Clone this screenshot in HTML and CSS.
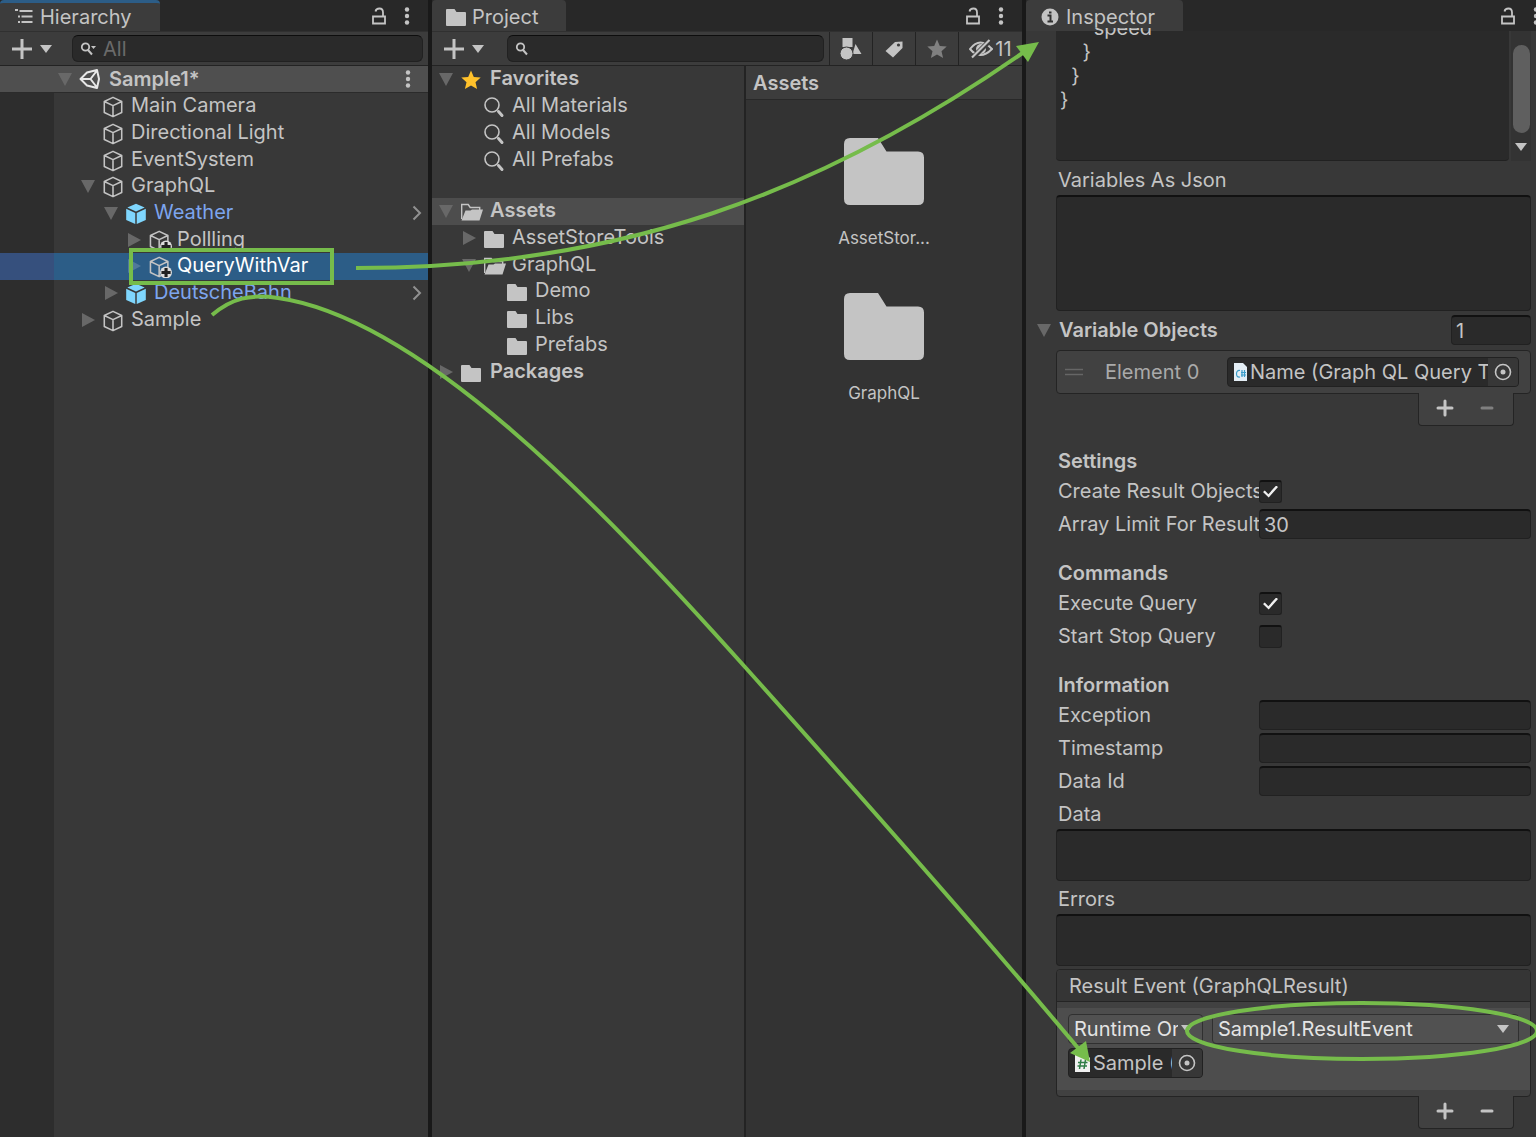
FILE: index.html
```html
<!DOCTYPE html>
<html lang="en">
<head>
<meta charset="utf-8">
<title>Editor</title>
<link rel="stylesheet" href="styles.css">
</head>
<body>
<svg class="sprite" aria-hidden="true">
  <symbol id="cube" viewBox="0 0 22 24"><path d="M11 1.500 20.500 6v12L11 22.500 1.500 18V6zM1.500 6 11 10.500 20.500 6M11 10.500v12" fill="none" stroke="currentColor" stroke-width="1.700" stroke-linejoin="round"/></symbol>
  <symbol id="cube-add" viewBox="0 0 26 24"><path d="M11 1.500 20.500 6v12L11 22.500 1.500 18V6zM1.500 6 11 10.500 20.500 6M11 10.500v12" fill="none" stroke="currentColor" stroke-width="1.700" stroke-linejoin="round"/><circle cx="18.500" cy="18" r="6.500" fill="#dcdcdc"/><path d="M18.500 13v10M13.500 18h10" stroke="#222" stroke-width="3.400"/></symbol>
  <symbol id="prefab" viewBox="0 0 22 24"><path d="M11 .8 20.500 5 11 9.400 1.500 5zM.3 6.300 10.200 10.800V23L.3 18.500zM21.700 6.300 11.800 10.800V23l9.900-4.500z" fill="#7fd6fd"/></symbol>
  <symbol id="unity" viewBox="0 0 22 22"><path d="M1.500 11 8 4.500 18 2 20 11 18 20 8 17.500zM11.500 11H2M11.500 11 18 2.500M11.500 11 18 19.500" fill="none" stroke="#e8e8e8" stroke-width="2" stroke-linejoin="round"/></symbol>
  <symbol id="open" viewBox="0 0 16 16"><path d="M1 2h14L8 15z" fill="currentColor"/></symbol>
  <symbol id="closed" viewBox="0 0 16 16"><path d="M2 1v14l13-7z" fill="currentColor"/></symbol>
  <symbol id="folder" viewBox="0 0 22 20"><path d="M1 3q0-1 1-1h7.500l2 3H20q1 0 1 1v12q0 1-1 1H2q-1 0-1-1z" fill="currentColor"/></symbol>
  <symbol id="folder-open" viewBox="0 0 24 20"><path d="M1.700 17V2.500h6.500l2 3h9.500V8" fill="none" stroke="currentColor" stroke-width="1.400"/><path d="M5.500 8.500h5l1.500-1h11L19.500 18.500H1.500z" fill="currentColor"/></symbol>
  <symbol id="big-folder" viewBox="0 0 80 67"><path d="M0 6q0-6 6-6h28l8.500 13.500H74q6 0 6 6V61q0 6-6 6H6q-6 0-6-6z" fill="currentColor"/></symbol>
  <symbol id="star" viewBox="0 0 20 20"><path d="M10 .5 12.800 7l6.900.6-5.200 4.600 1.600 6.900L10 15.500l-6.100 3.600 1.600-6.900L.3 7.600 7.200 7z" fill="currentColor"/></symbol>
  <symbol id="lens" viewBox="0 0 22 22"><circle cx="9" cy="9" r="7" fill="none" stroke="currentColor" stroke-width="1.600"/><path d="m15.500 15.500 3.500 4" stroke="currentColor" stroke-width="3" stroke-linecap="round"/></symbol>
  <symbol id="lens-small" viewBox="0 0 16 14"><circle cx="5.500" cy="5" r="3.700" fill="none" stroke="currentColor" stroke-width="1.800"/><path d="m8 8 4 4.500" stroke="currentColor" stroke-width="2"/></symbol>
  <symbol id="lens-menu" viewBox="0 0 16 14"><circle cx="5.500" cy="5" r="3.700" fill="none" stroke="currentColor" stroke-width="1.800"/><path d="m8 8 4 4.500" stroke="currentColor" stroke-width="2"/><path d="M11 4h5l-2.500 3z" fill="currentColor"/></symbol>
  <symbol id="plus" viewBox="0 0 20 20"><path d="M10 0v20M0 10h20" stroke="currentColor" stroke-width="3"/></symbol>
  <symbol id="caret" viewBox="0 0 12 8"><path d="M0 0h12L6 8z" fill="currentColor"/></symbol>
  <symbol id="lock" viewBox="0 0 16 18"><path d="M2 9.500h12v7H2zM4.500 4.500Q5 1.500 8.500 1.500q3.500 0 3.500 4v4" fill="none" stroke="currentColor" stroke-width="1.800"/></symbol>
  <symbol id="dots" viewBox="0 0 6 18"><circle cx="3" cy="2.500" r="2.200" fill="currentColor"/><circle cx="3" cy="9" r="2.200" fill="currentColor"/><circle cx="3" cy="15.500" r="2.200" fill="currentColor"/></symbol>
  <symbol id="chevron" viewBox="0 0 10 16"><path d="m1.500 1.500 6.500 6.500-6.500 6.500" fill="none" stroke="#919191" stroke-width="2"/></symbol>
  <symbol id="target" viewBox="0 0 18 18"><circle cx="9" cy="9" r="7.500" fill="none" stroke="currentColor" stroke-width="1.600"/><circle cx="9" cy="9" r="2.500" fill="currentColor"/></symbol>
  <symbol id="add" viewBox="0 0 18 18"><path d="M9 2v14M2 9h14" stroke="currentColor" stroke-width="3" stroke-linecap="round"/></symbol>
  <symbol id="remove" viewBox="0 0 18 18"><path d="M4 9h10" stroke="currentColor" stroke-width="3" stroke-linecap="round"/></symbol>
</svg>

<main class="editor">
  <section class="panel" aria-label="Hierarchy">
    <header class="tabs">
      <button class="tab tab-focused"><svg class="i18" viewBox="0 0 18 18" aria-hidden="true"><path d="M0 2h3M4.500 3h13M6.500 8.500h11M6.500 14h11M3 8.500h2M3 14h2" stroke="currentColor" stroke-width="2"/></svg>Hierarchy</button>
      <div class="tab-actions">
        <button aria-label="Lock"><svg class="lock"><use href="#lock"/></svg></button>
        <button aria-label="Menu"><svg class="dots"><use href="#dots"/></svg></button>
      </div>
    </header>
    <div class="toolbar">
      <button class="create" aria-label="Create"><svg class="i20"><use href="#plus"/></svg><svg class="caret"><use href="#caret"/></svg></button>
      <label class="search"><svg class="lens"><use href="#lens-menu"/></svg><input type="text" placeholder="All" aria-label="Search hierarchy"></label>
    </div>
    <div class="scene"><svg class="tri"><use href="#open"/></svg><svg class="icon"><use href="#unity"/></svg><b>Sample1*</b><button class="push" aria-label="Scene menu"><svg class="dots"><use href="#dots"/></svg></button></div>
    <div class="outline">
      <ul class="tree tree-scene">
        <li class="row d1"><svg class="tri"></svg><svg class="icon"><use href="#cube"/></svg><span>Main Camera</span></li>
        <li class="row d1"><svg class="tri"></svg><svg class="icon"><use href="#cube"/></svg><span>Directional Light</span></li>
        <li class="row d1"><svg class="tri"></svg><svg class="icon"><use href="#cube"/></svg><span>EventSystem</span></li>
        <li class="row d1"><svg class="tri"><use href="#open"/></svg><svg class="icon"><use href="#cube"/></svg><span>GraphQL</span></li>
        <li class="row d2 prefab"><svg class="tri"><use href="#open"/></svg><svg class="icon"><use href="#prefab"/></svg><span>Weather</span><svg class="chevron push"><use href="#chevron"/></svg></li>
        <li class="row d3"><svg class="tri"><use href="#closed"/></svg><svg class="icon icon-wide"><use href="#cube-add"/></svg><span>Pollling</span></li>
        <li class="row d3 selected"><svg class="tri"><use href="#closed"/></svg><svg class="icon icon-wide"><use href="#cube-add"/></svg><span>QueryWithVar</span></li>
        <li class="row d2 prefab"><svg class="tri"><use href="#closed"/></svg><svg class="icon"><use href="#prefab"/></svg><span>DeutscheBahn</span><svg class="chevron push"><use href="#chevron"/></svg></li>
        <li class="row d1"><svg class="tri"><use href="#closed"/></svg><svg class="icon"><use href="#cube"/></svg><span>Sample</span></li>
      </ul>
    </div>
  </section>

  <section class="panel" aria-label="Project">
    <header class="tabs">
      <button class="tab"><svg class="icon"><use href="#folder"/></svg>Project</button>
      <div class="tab-actions">
        <button aria-label="Lock"><svg class="lock"><use href="#lock"/></svg></button>
        <button aria-label="Menu"><svg class="dots"><use href="#dots"/></svg></button>
      </div>
    </header>
    <div class="toolbar toolbar-flush">
      <button class="create" aria-label="Create"><svg class="i20"><use href="#plus"/></svg><svg class="caret"><use href="#caret"/></svg></button>
      <label class="search search-project"><svg class="lens"><use href="#lens-small"/></svg><input type="text" aria-label="Search project"></label>
      <button class="filter" aria-label="Search by type"><svg class="i22" viewBox="0 0 22 24"><path d="M2.500 1h10v9h-10zM15.500 7l6 10h-9z" fill="currentColor"/><circle cx="6.500" cy="16.500" r="6.500" fill="currentColor" stroke="#3c3c3c"/></svg></button>
      <button class="filter" aria-label="Search by label"><svg class="i20" viewBox="0 0 20 20"><path d="M1.500 12 11 3l7.500-.5V9L9 18.500z" fill="currentColor"/><circle cx="14.500" cy="6" r="1.600" fill="#3c3c3c"/></svg></button>
      <button class="filter faded" aria-label="Save search"><svg class="i20"><use href="#star"/></svg></button>
      <button class="filter filter-count" aria-label="Hidden packages"><svg class="i24" viewBox="0 0 24 20"><path d="M1 10q10-13 22 0-12 12-22 0z" fill="none" stroke="currentColor" stroke-width="2"/><circle cx="12" cy="10" r="5" fill="currentColor"/><path d="M4 18.500 21 1.500" stroke="#3c3c3c" stroke-width="5"/><path d="M3 18.500 20.500 1" stroke="currentColor" stroke-width="2.200"/></svg>11</button>
    </div>
    <div class="browser">
      <nav class="folders" aria-label="Folders">
        <ul class="tree tree-favorites">
          <li class="row d0"><svg class="tri"><use href="#open"/></svg><svg class="icon gold"><use href="#star"/></svg><b>Favorites</b></li>
          <li class="row d1"><svg class="tri"></svg><svg class="icon"><use href="#lens"/></svg><span>All Materials</span></li>
          <li class="row d1"><svg class="tri"></svg><svg class="icon"><use href="#lens"/></svg><span>All Models</span></li>
          <li class="row d1"><svg class="tri"></svg><svg class="icon"><use href="#lens"/></svg><span>All Prefabs</span></li>
        </ul>
        <ul class="tree tree-folders">
          <li class="row d0 current"><svg class="tri"><use href="#open"/></svg><svg class="icon icon-open"><use href="#folder-open"/></svg><b>Assets</b></li>
          <li class="row d1"><svg class="tri"><use href="#closed"/></svg><svg class="icon"><use href="#folder"/></svg><span>AssetStoreTools</span></li>
          <li class="row d1"><svg class="tri"><use href="#open"/></svg><svg class="icon icon-open"><use href="#folder-open"/></svg><span>GraphQL</span></li>
          <li class="row d2"><svg class="tri"></svg><svg class="icon"><use href="#folder"/></svg><span>Demo</span></li>
          <li class="row d2"><svg class="tri"></svg><svg class="icon"><use href="#folder"/></svg><span>Libs</span></li>
          <li class="row d2"><svg class="tri"></svg><svg class="icon"><use href="#folder"/></svg><span>Prefabs</span></li>
          <li class="row d0"><svg class="tri"><use href="#closed"/></svg><svg class="icon"><use href="#folder"/></svg><b>Packages</b></li>
        </ul>
      </nav>
      <div class="assets">
        <h2 class="assets-path">Assets</h2>
        <div class="asset-grid">
          <figure class="asset"><svg class="asset-icon"><use href="#big-folder"/></svg><figcaption>AssetStor...</figcaption></figure>
          <figure class="asset"><svg class="asset-icon"><use href="#big-folder"/></svg><figcaption>GraphQL</figcaption></figure>
        </div>
      </div>
    </div>
  </section>

  <section class="panel inspector" aria-label="Inspector">
    <header class="tabs">
      <button class="tab"><svg class="i18" viewBox="0 0 18 18"><circle cx="9" cy="9" r="8.500" fill="currentColor"/><path d="M6.500 7.500H9.500v5.500M6.500 13.500h5.500M8 4.500h2.500" fill="none" stroke="#303030" stroke-width="2"/></svg>Inspector</button>
      <div class="tab-actions tab-actions-edge">
        <button aria-label="Lock"><svg class="lock"><use href="#lock"/></svg></button>
        <button aria-label="Menu"><svg class="dots"><use href="#dots"/></svg></button>
      </div>
    </header>
    <form class="form">
      <div class="query">
        <div class="query-view"><textarea class="query-text" aria-label="Query" spellcheck="false">      speed
    }
  }
}</textarea></div>
        <div class="scroll"><span class="thumb"></span><svg class="caret"><use href="#caret"/></svg></div>
      </div>

      <label class="caption" for="vars">Variables As Json</label>
      <textarea class="box box-tall" id="vars"></textarea>

      <div class="list-head"><svg class="tri"><use href="#open"/></svg><label for="size"><b>Variable Objects</b></label><input class="box size" id="size" type="text" value="1"></div>
      <div class="list">
        <svg class="grip" viewBox="0 0 18 8"><path d="M0 1.500h18M0 6.500h18" stroke="#666" stroke-width="1.500"/></svg>
        <span class="list-label">Element 0</span>
        <div class="object"><svg class="doc" viewBox="0 0 13 18"><path d="M0 0h9l4 4v14H0z" fill="#e4eef5"/><path d="M6 7.500Q2.500 7 2.500 10.800T6 14M8 7v7M10.500 7v7M7 9.500h5M7 12h5" fill="none" stroke="#3a9cc8" stroke-width="1.200"/></svg><span class="object-name">Name (Graph QL Query Type)</span><button type="button" class="pick" aria-label="Pick object"><svg class="i18"><use href="#target"/></svg></button></div>
      </div>
      <div class="list-foot"><button type="button" aria-label="Add variable"><svg class="i18"><use href="#add"/></svg></button><button type="button" class="faded" aria-label="Remove variable"><svg class="i18"><use href="#remove"/></svg></button></div>

      <h3 class="heading">Settings</h3>
      <div class="field"><label for="create">Create Result Objects</label><input type="checkbox" id="create" checked></div>
      <div class="field"><label for="limit">Array Limit For Result</label><input class="box" type="text" id="limit" value="30"></div>

      <h3 class="heading">Commands</h3>
      <div class="field"><label for="exec">Execute Query</label><input type="checkbox" id="exec" checked></div>
      <div class="field"><label for="start">Start Stop Query</label><input type="checkbox" id="start"></div>

      <h3 class="heading">Information</h3>
      <div class="field"><label for="exc">Exception</label><input class="box" type="text" id="exc"></div>
      <div class="field"><label for="time">Timestamp</label><input class="box" type="text" id="time"></div>
      <div class="field"><label for="did">Data Id</label><input class="box" type="text" id="did"></div>
      <label class="caption" for="data">Data</label>
      <textarea class="box box-short" id="data"></textarea>
      <label class="caption" for="errors">Errors</label>
      <textarea class="box box-short" id="errors"></textarea>

      <div class="event">
        <div class="event-title">Result Event (GraphQLResult)</div>
        <div class="event-body">
          <div class="pair">
            <div class="select"><select aria-label="Call state"><option>Runtime Only</option></select><svg class="caret"><use href="#caret"/></svg></div>
            <div class="select"><select aria-label="Function"><option>Sample1.ResultEvent</option></select><svg class="caret"><use href="#caret"/></svg></div>
          </div>
          <div class="pair">
            <div class="object"><svg class="doc doc-wide" viewBox="0 0 15 18"><path d="M0 0h11l4 4v14H0z" fill="#f0f0f0"/><path d="M6 5.500 4.500 15M10.500 5.500 9 15M3 8.500h9.500M2.500 12H12" fill="none" stroke="#2f7d46" stroke-width="1.500"/></svg><span class="object-name">Sample (Sample1)</span><button type="button" class="pick" aria-label="Pick object"><svg class="i18"><use href="#target"/></svg></button></div>
          </div>
        </div>
      </div>
      <div class="list-foot"><button type="button" aria-label="Add listener"><svg class="i18"><use href="#add"/></svg></button><button type="button" aria-label="Remove listener"><svg class="i18"><use href="#remove"/></svg></button></div>
    </form>
  </section>
</main>

<svg class="notes" viewBox="0 0 1536 1137" aria-hidden="true">
  <g fill="none" stroke="#76bc4b" stroke-width="4">
    <rect x="131" y="250" width="201" height="33"/>
    <path d="M356 268C620 268 820 194 1024 52"/>
    <path d="M212 315C232 298 250 294 278 298C420 318 600 505 745 667C840 773 975 925 1078 1048"/>
    <ellipse cx="1362" cy="1031" rx="175" ry="28"/>
  </g>
  <path d="M1039 42 1016 46 1028 62zM1090 1062 1070 1053 1086 1041z" fill="#76bc4b"/>
</svg>
</body>
</html>
```
FILE: styles.css
```css
* { box-sizing: border-box; }

body {
  margin: 0;
  position: relative;
  overflow-x: hidden;
  background: #191919;
  color: #c4c4c4;
  font: 20px/24px Inter, "Liberation Sans", sans-serif;
}

button, input, textarea, select { font: inherit; color: inherit; margin: 0; }
button { display: flex; align-items: center; padding: 0; border: 0; background: none; }
svg { display: block; flex: none; }
b, h2, h3 { font-weight: 600; }
h2, h3, ul, figure { margin: 0; padding: 0; }
ul { list-style: none; }

.sprite { position: absolute; width: 0; height: 0; }
.notes { position: absolute; top: 0; left: 0; width: 100%; pointer-events: none; }

.editor {
  display: grid;
  grid-template-columns: 428fr 590fr 510fr;
  gap: 4px;
  min-height: 100vh;
}
.panel { display: flex; flex-direction: column; min-width: 0; overflow: hidden; background: #383838; }

/* icon sizes */
.i18 { width: 18px; height: 18px; }
.i20 { width: 20px; height: 20px; }
.i22 { width: 22px; height: 24px; }
.i24 { width: 24px; height: 20px; }
.tri { width: 16px; height: 16px; color: #686868; }
.icon { width: 22px; height: 22px; }
.icon-wide { width: 26px; margin-right: -4px; }
.icon-open { width: 24px; margin-right: -2px; }
.caret { width: 12px; height: 8px; }
.lock { width: 16px; height: 18px; }
.dots { width: 6px; height: 18px; }
.chevron { width: 10px; height: 16px; }
.lens { width: 16px; height: 14px; }
.gold { color: #ffc12b; padding: 1px; }
.faded { color: #808080; }
.push { margin-left: auto; }

/* tab strip */
.tabs { display: flex; justify-content: space-between; height: 31px; background: #282828; }
.tab { gap: 7px; padding: 2px 28px 0 15px; background: #3c3c3c; border-radius: 4px 4px 0 0; }
.tab .icon { margin: 0 -2px; }
.tab-focused { border-top: 3px solid #2c5d87; padding-top: 0; }
.tab-actions { display: flex; align-items: center; gap: 17px; padding-right: 18px; }
.tab-actions-edge { padding-right: 0; margin-right: -3px; }

/* toolbar */
.toolbar {
  display: flex;
  align-items: center;
  height: 35px;
  padding: 0 5px 0 12px;
  background: #3c3c3c;
  border-top: 1px solid #303030;
  border-bottom: 1px solid #232323;
}
.toolbar-flush { padding-right: 0; align-items: stretch; }
.create { gap: 8px; margin-right: 20px; align-self: center; }
.search {
  display: flex;
  align-items: center;
  gap: 7px;
  flex: 1;
  min-width: 0;
  height: 27px;
  padding: 0 7px;
  background: #2a2a2a;
  border: 1px solid #212121;
  border-top-color: #0d0d0d;
  border-radius: 6px;
}
.search-project { margin: 0 5px 0 3px; align-self: center; }
.search input { flex: 1; min-width: 0; height: 24px; padding: 0; border: 0; background: none; outline: 0; }
.search input::placeholder { color: #6a6a6a; opacity: 1; }
.filter { justify-content: center; width: 43px; border-left: 1px solid #232323; }
.filter-count { width: 64px; gap: 2px; }

/* trees */
.row, .scene { display: flex; align-items: center; gap: 6px; white-space: nowrap; }
.scene { height: 27px; padding: 0 17px 0 57px; background: #4f4f4f; border-bottom: 1px solid #2b2b2b; }
.outline { flex: 1; background: linear-gradient(90deg, #2d2d2d 54px, #383838 54px); }
.tree { display: grid; grid-auto-rows: 1fr; }
.row .icon { position: relative; top: 1px; }
.row span { padding: 0 0 2px 1px; }
.row b { padding: 0 0 2px 2px; }
.scene b { padding-left: 2px; }
.tree-scene { height: 240px; }
.tree-scene .row { padding-right: 6px; }
.tree-scene .d1 { padding-left: 80px; }
.tree-scene .d2 { padding-left: 103px; }
.tree-scene .d3 { padding-left: 126px; }
.prefab { color: #7da5ee; }
.selected { color: #fff; background: linear-gradient(90deg, #36507d 54px, #2c5d87 54px); }
.selected .icon { color: #c4c4c4; }
.selected .tri { color: #51799b; }

.browser { display: grid; grid-template-columns: 312fr 276fr; gap: 2px; flex: 1; background: #232323; }
.folders { background: #383838; }
.tree-favorites { height: 107px; margin-bottom: 25px; }
.tree-folders { height: 187px; }
.folders .d0 { padding-left: 6px; }
.folders .d1 { padding-left: 29px; }
.folders .d2 { padding-left: 52px; }
.current { background: #4d4d4d; }

.assets { background: #333; }
.assets-path { height: 34px; padding: 5px 7px; font-size: 20px; background: #3c3c3c; border-bottom: 1px solid #282828; }
.asset-grid { display: flex; flex-direction: column; align-items: center; gap: 43px; padding-top: 38px; }
.asset { display: flex; flex-direction: column; align-items: center; gap: 21px; font-size: 17px; }
.asset-icon { width: 80px; height: 67px; }

/* inspector form */
.form { display: flex; flex-direction: column; gap: 3px; padding: 0 5px 9px 30px; }
.box {
  width: 100%;
  min-width: 0;
  height: 30px;
  padding: 0 4px;
  background: #2a2a2a;
  border: 1px solid #212121;
  border-top: 2px solid #111;
  border-radius: 4px;
  outline: 0;
  resize: none;
}
textarea.box { display: block; }
.box-tall { height: 116px; }
.box-short { height: 52px; }

.query { position: relative; display: grid; grid-template-columns: 1fr 20px; gap: 2px; height: 133px; margin-top: -3px; }
.query-view {
  display: flex;
  align-items: flex-end;
  overflow: hidden;
  background: linear-gradient(transparent 3px, #2a2a2a 3px);
  border-bottom: 1px solid #212121;
  border-radius: 0 0 4px 4px;
}
.query-text { flex: 1; height: 144px; padding: 0 4px; border: 0; background: none; outline: 0; resize: none; overflow: hidden; }
.scroll { display: flex; flex-direction: column; align-items: center; gap: 10px; margin-top: 3px; padding-top: 14px; background: #333; }
.thumb { width: 17px; height: 88px; border-radius: 9px; background: #5f5f5f; }

.caption { height: 30px; padding: 3px 2px; margin-bottom: -3px; }
.query + .caption { margin-top: 1px; }
.list-head { display: grid; grid-template-columns: 16px 1fr 80px; align-items: center; margin: 1px 0 2px -20px; }
.list-head label { padding-left: 7px; }
.list {
  display: grid;
  grid-template-columns: 18px 112px 1fr;
  align-items: center;
  gap: 16px;
  height: 44px;
  padding: 0 11px 0 8px;
  background: #414141;
  border: 1px solid #242424;
  border-radius: 4px;
}
.list-label { color: #aaa; padding-left: 6px; }
.grip { width: 18px; height: 8px; }
.list-foot {
  display: flex;
  align-self: flex-end;
  justify-content: space-between;
  width: 96px;
  height: 33px;
  margin: -4px 17px 0 0;
  padding: 0 17px 2px;
  background: #414141;
  border: 1px solid #242424;
  border-top: 0;
  border-radius: 0 0 4px 4px;
}

.object {
  display: flex;
  align-items: center;
  gap: 3px;
  min-width: 0;
  height: 30px;
  padding-left: 6px;
  background: #2a2a2a;
  border: 1px solid #212121;
  border-radius: 4px;
  overflow: hidden;
}
.doc { width: 13px; height: 18px; }
.doc-wide { width: 15px; }
.object-name { flex: 1; min-width: 0; overflow: hidden; white-space: nowrap; }
.pick { flex: none; justify-content: center; width: 30px; height: 28px; margin-left: -3px; background: #373737; }

.heading { height: 30px; padding: 3px 2px; margin: 16px 0 -3px; font-size: 20px; }
.list-foot + .heading { margin-top: 17px; }
.field { display: grid; grid-template-columns: 201px 1fr; align-items: center; height: 30px; padding-left: 2px; }
.field label { overflow: hidden; white-space: nowrap; }

input[type="checkbox"] {
  appearance: none;
  width: 23px;
  height: 23px;
  background: #2a2a2a;
  border: 1px solid #212121;
  border-top: 2px solid #111;
  border-radius: 3px;
  display: grid;
  place-items: center;
}
input[type="checkbox"]:checked::before {
  content: "";
  width: 15px;
  height: 12px;
  background: #f0f0f0;
  clip-path: polygon(0 54%, 12% 42%, 36% 72%, 88% 0, 100% 12%, 38% 100%);
}

.event { display: flex; flex-direction: column; background: #414141; border: 1px solid #242424; border-radius: 4px; }
.event-title { height: 32px; padding: 4px 12px; background: #353535; border-bottom: 1px solid #242424; border-radius: 4px 4px 0 0; }
.event-body { display: flex; flex-direction: column; gap: 4px; height: 82px; margin: 6px 0; padding: 6px 11px; background: #4d4d4d; }
.pair { display: grid; grid-template-columns: 135fr 307fr; gap: 9px; }
.select { display: grid; grid-template-columns: minmax(0, 1fr) 22px; align-items: center; }
.select select {
  grid-area: 1 / 1 / 2 / 3;
  appearance: none;
  min-width: 0;
  width: 100%;
  height: 30px;
  padding: 0 24px 0 5px;
  background: #515151;
  border: 1px solid #303030;
  border-radius: 4px;
  color: #e4e4e4;
  outline: 0;
}
.select .caret { grid-area: 1 / 2; }
```
